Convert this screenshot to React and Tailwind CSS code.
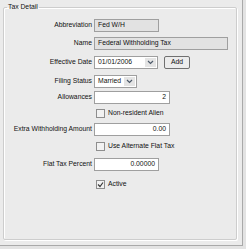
import React from 'react';

const font = { fontFamily: '"Liberation Sans", Arial, sans-serif' };

const Label = ({ children }) => (
  <div className="w-[90px] shrink-0 pr-[2px] text-right leading-none whitespace-nowrap">{children}</div>
);

const Field = ({ value, className = '', disabled = false, right = false }) => (
  <div
    className={`h-[13px] border border-[#9f9f9f] flex items-center px-[3px] leading-none whitespace-nowrap overflow-hidden ${
      disabled ? 'bg-[#e2e2e2]' : 'bg-white'
    } ${right ? 'justify-end' : ''} ${className}`}
  >
    {value}
  </div>
);

const Chevron = () => (
  <svg width="7" height="5" viewBox="0 0 7 5">
    <path d="M1 1 L3.5 3.5 L6 1" stroke="#4d5a6a" strokeWidth="1.2" fill="none" />
  </svg>
);

const Select = ({ value, className = '' }) => (
  <div className={`h-[13px] border border-[#9f9f9f] bg-white flex items-stretch ${className}`}>
    <div className="flex-1 flex items-center pl-[3px] leading-none whitespace-nowrap">{value}</div>
    <div className="w-[11px] m-[1px] bg-[#e4e4e4] flex items-center justify-center">
      <Chevron />
    </div>
  </div>
);

const Check = ({ checked, label }) => (
  <div className="flex items-center gap-[3px]">
    <div className="w-[9px] h-[9px] border border-[#8e8e8e] bg-[#f2f2f2] flex items-center justify-center">
      {checked && (
        <svg width="7" height="7" viewBox="0 0 7 7">
          <path d="M1 3.5 L3 5.5 L6 1.5" stroke="#3a3a3a" strokeWidth="1.2" fill="none" />
        </svg>
      )}
    </div>
    <span className="leading-none whitespace-nowrap">{label}</span>
  </div>
);

export default function App() {
  return (
    <div className="w-[246px] h-[249px] bg-[#e3e3e3] text-[6.8px] text-[#111]" style={font}>
      <div className="w-[243px] h-[246px] bg-[#ebebeb] border-r border-b border-[#a9a9a9] pt-[3px] pl-[3px]">
        <fieldset className="w-[234px] h-[237px] border border-[#cdcdcd] shadow-[1px_1px_0_#fff,inset_1px_1px_0_#fff] rounded-[2px]">
          <legend className="ml-[3px] px-[1px] leading-[8px]">Tax Detail</legend>

          <div className="flex flex-col">
            <div className="flex items-center mt-[8px]">
              <Label>Abbreviation</Label>
              <Field value="Fed W/H" disabled className="w-[65px]" />
            </div>
            <div className="flex items-center mt-[5px]">
              <Label>Name</Label>
              <Field value="Federal Withholding Tax" disabled className="w-[134px]" />
            </div>
            <div className="flex items-center mt-[6px]">
              <Label>Effective Date</Label>
              <Select value="01/01/2006" className="w-[64px]" />
              <button className="ml-[6px] h-[13px] w-[26px] border border-[#707070] rounded-[2px] bg-[#ececec] leading-none">
                Add
              </button>
            </div>
            <div className="flex items-center mt-[6px]">
              <Label>Filing Status</Label>
              <Select value="Married" className="w-[43px]" />
            </div>
            <div className="flex items-center mt-[3px]">
              <Label>Allowances</Label>
              <Field value="2" right className="w-[76px]" />
            </div>
            <div className="flex items-center mt-[4px] h-[11px] pl-[92px]">
              <Check label="Non-resident Alien" />
            </div>
            <div className="flex items-center mt-[4px]">
              <Label>Extra Withholding Amount</Label>
              <Field value="0.00" right className="w-[76px]" />
            </div>
            <div className="flex items-center mt-[5px] h-[11px] pl-[92px]">
              <Check label="Use Alternate Flat Tax" />
            </div>
            <div className="flex items-center mt-[6px]">
              <Label>Flat Tax Percent</Label>
              <Field value="0.00000" right className="w-[65px]" />
            </div>
            <div className="flex items-center mt-[8px] h-[11px] pl-[92px]">
              <Check checked label="Active" />
            </div>
          </div>
        </fieldset>
      </div>
    </div>
  );
}
